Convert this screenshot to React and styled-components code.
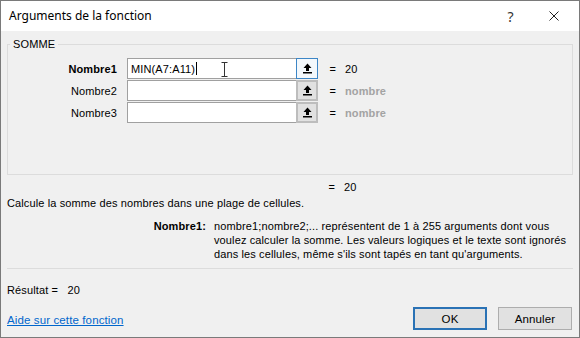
import React from "react";
import styled, { createGlobalStyle } from "styled-components";

const Global = createGlobalStyle`
  html, body { margin: 0; padding: 0; background: #f0f0f0; }
  * { box-sizing: border-box; }
`;

const COLS = "119px 169px 22px 18px auto";

const Window = styled.div`
  width: 580px;
  height: 338px;
  border: 1px solid #7a7a7a;
  background: #f0f0f0;
  display: flex;
  flex-direction: column;
  font-family: "Liberation Sans", Arial, sans-serif;
  font-size: 11px;
  letter-spacing: 0.12px;
  color: #000;
  overflow: hidden;
`;

const TitleBar = styled.div`
  height: 30px;
  background: #fff;
  display: flex;
  align-items: center;
  padding-left: 8px;
  padding-right: 4px;
  font-family: "Noto Sans", "Open Sans", sans-serif;
  font-size: 12px;
  letter-spacing: 0;
  flex-shrink: 0;
`;

const Title = styled.div`
  flex: 1;
  padding-bottom: 1px;
`;

const TitleButton = styled.div`
  width: 43px;
  height: 30px;
  display: flex;
  align-items: center;
  justify-content: center;
  font-size: 14px;
  color: #333;
`;

const Body = styled.div`
  flex: 1;
  padding: 6px 6px 0 6px;
  display: flex;
  flex-direction: column;
`;

const Group = styled.fieldset`
  margin: 0;
  padding: 7px 0 0 0;
  height: 138px;
  border: 1px solid #dcdcdc;
  display: flex;
  flex-direction: column;
  gap: 1px;
  flex-shrink: 0;
`;

const Legend = styled.legend`
  padding: 0 3px;
  margin-left: 2px;
  line-height: 14px;
  font-size: 11px;
`;

const Row = styled.div`
  display: grid;
  grid-template-columns: ${COLS};
  align-items: center;
  height: 21px;
`;

const Label = styled.div`
  text-align: right;
  padding-right: 10px;
  font-weight: ${(p) => (p.$bold ? "bold" : "normal")};
`;

const Input = styled.div`
  height: 21px;
  background: #fff;
  border: 1px solid #a0a0a0;
  border-right: none;
  display: flex;
  align-items: center;
  padding-left: 3px;
  position: relative;
`;

const Caret = styled.span`
  display: inline-block;
  width: 1px;
  height: 13px;
  background: #000;
  margin-left: 1px;
`;

const RefButton = styled.div`
  height: 21px;
  width: 22px;
  display: flex;
  align-items: center;
  justify-content: center;
  background: ${(p) => (p.$active ? "#f3f8fc" : "#e1e1e1")};
  border: ${(p) => (p.$active ? "1px solid #3d86c6" : "2px solid #bdbdbd")};
`;

const Eq = styled.div`
  grid-column: 4;
  text-align: right;
`;

const Value = styled.div`
  grid-column: 5;
  padding-left: 9px;
  color: ${(p) => (p.$muted ? "#a3a3a3" : "#000")};
  font-weight: ${(p) => (p.$muted ? "bold" : "normal")};
`;

const ResultRow = styled.div`
  display: grid;
  grid-template-columns: ${COLS};
  height: 14px;
  line-height: 14px;
  align-items: center;
  margin-top: 5px;
  flex-shrink: 0;
`;

const Text = styled.div`
  line-height: 14px;
  margin-top: ${(p) => p.$mt || 0}px;
  flex-shrink: 0;
`;

const HelpBlock = styled.div`
  display: grid;
  grid-template-columns: 199px auto;
  column-gap: 8px;
  margin-top: 9px;
  line-height: 14px;
  flex-shrink: 0;
`;

const HelpLabel = styled.div`
  text-align: right;
  font-weight: bold;
`;

const HelpText = styled.div`
  width: 360px;
`;

const Separator = styled.div`
  height: 1px;
  background: #dcdcdc;
  margin-top: 7px;
  flex-shrink: 0;
`;

const Footer = styled.div`
  flex: 1;
  display: flex;
  align-items: flex-end;
  justify-content: space-between;
`;

const Link = styled.a`
  color: #0066cc;
  text-decoration: underline;
  margin-bottom: 11px;
  font-size: 11.5px;
`;

const Buttons = styled.div`
  display: flex;
  gap: 11px;
  margin-bottom: 7px;
  margin-right: 1px;
`;

const Button = styled.div`
  width: 74px;
  height: 23px;
  display: flex;
  align-items: center;
  justify-content: center;
  background: #e1e1e1;
  border: ${(p) => (p.$default ? "2px solid #2a72b5" : "1px solid #adadad")};
  font-size: 11.5px;
`;

const Cursor = styled.svg`
  position: absolute;
  left: 93px;
  top: 3px;
`;

const ArrowIcon = () => (
  <svg width="9" height="11" viewBox="0 0 9 11">
    <path d="M4.5 0.5 L8.5 5 L6 5 L6 8 L3 8 L3 5 L0.5 5 Z" fill="#000" />
    <rect x="0" y="9" width="9" height="1.5" fill="#000" />
  </svg>
);

const CloseIcon = () => (
  <svg width="10" height="10" viewBox="0 0 10 10">
    <path d="M0.5 0.5 L9.5 9.5 M9.5 0.5 L0.5 9.5" stroke="#222" strokeWidth="1" />
  </svg>
);

const rows = [
  { name: "Nombre1", value: "MIN(A7:A11)", result: "20", active: true },
  { name: "Nombre2", value: "", result: "nombre" },
  { name: "Nombre3", value: "", result: "nombre" },
];

export default function App() {
  return (
    <>
      <Global />
      <Window>
        <TitleBar>
          <Title>Arguments de la fonction</Title>
          <TitleButton>?</TitleButton>
          <TitleButton><CloseIcon /></TitleButton>
        </TitleBar>
        <Body>
          <Group>
            <Legend>SOMME</Legend>
            {rows.map((r) => (
              <Row key={r.name}>
                <Label $bold={r.active}>{r.name}</Label>
                <Input>
                  {r.value}
                  {r.active && <Caret />}
                  {r.active && (
                    <Cursor width="7" height="15" viewBox="0 0 7 15">
                      <path d="M0.5 0.5 H6.5 M3.5 0.5 V14.5 M0.5 14.5 H6.5" stroke="#333" strokeWidth="1" fill="none" />
                    </Cursor>
                  )}
                </Input>
                <RefButton $active={r.active}><ArrowIcon /></RefButton>
                <Eq>=</Eq>
                <Value $muted={!r.active}>{r.result}</Value>
              </Row>
            ))}
          </Group>
          <ResultRow>
            <Eq>=</Eq>
            <Value>20</Value>
          </ResultRow>
          <Text $mt={2}>Calcule la somme des nombres dans une plage de cellules.</Text>
          <HelpBlock>
            <HelpLabel>Nombre1:</HelpLabel>
            <HelpText>
              nombre1;nombre2;... représentent de 1 à 255 arguments dont vous voulez calculer la somme. Les valeurs logiques et le texte sont ignorés dans les cellules, même s'ils sont tapés en tant qu'arguments.
            </HelpText>
          </HelpBlock>
          <Separator />
          <Text $mt={14}>Résultat =&nbsp;&nbsp;&nbsp;20</Text>
          <Footer>
            <Link href="#">Aide sur cette fonction</Link>
            <Buttons>
              <Button $default>OK</Button>
              <Button>Annuler</Button>
            </Buttons>
          </Footer>
        </Body>
      </Window>
    </>
  );
}
